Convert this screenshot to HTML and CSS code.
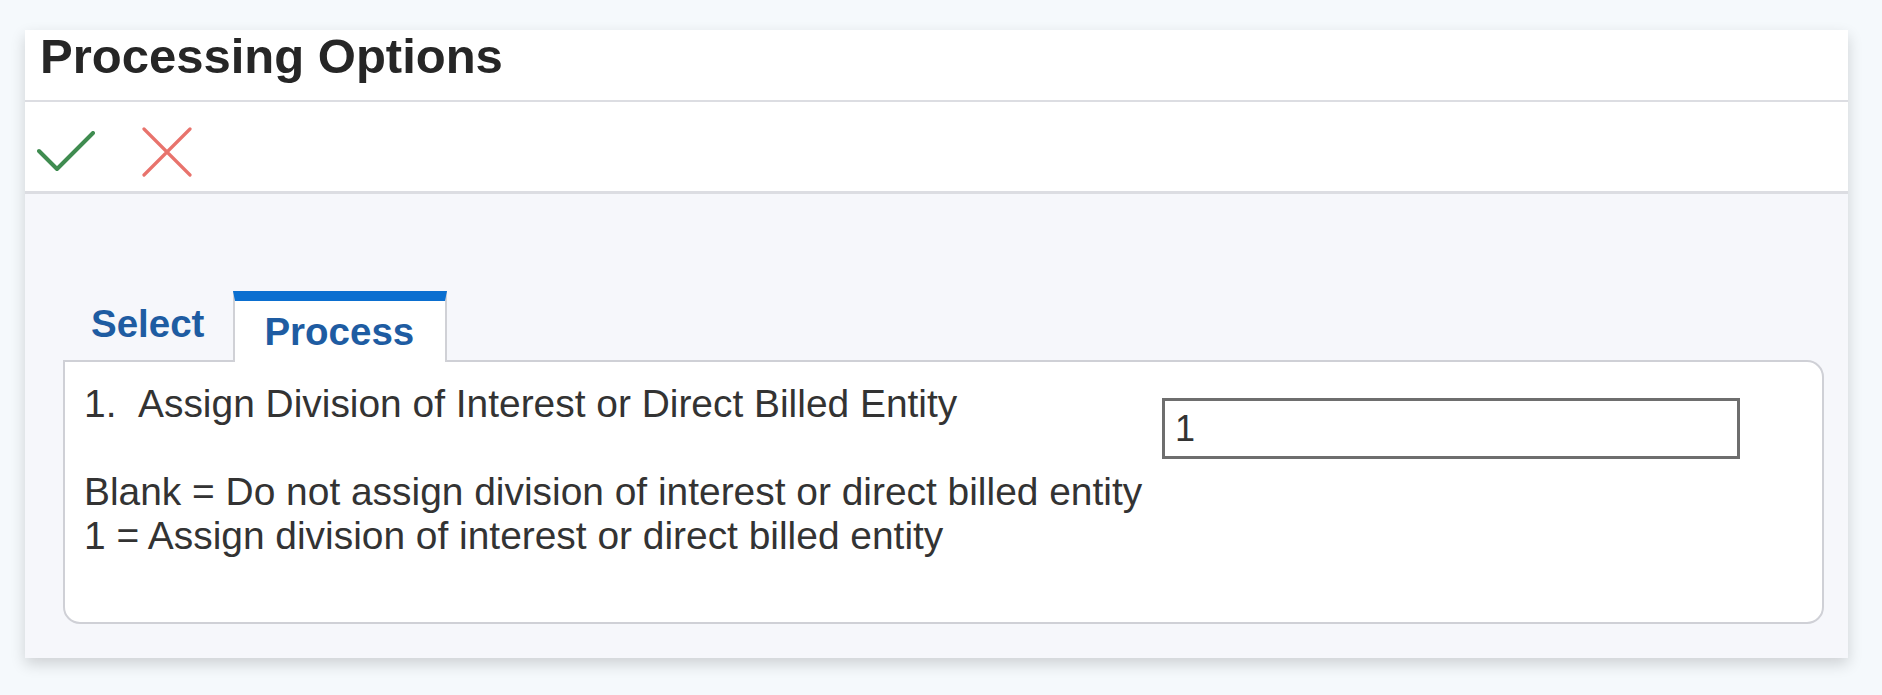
FILE: index.html
```html
<!DOCTYPE html>
<html lang="en">
<head>
<meta charset="utf-8">
<title>Processing Options</title>
<link rel="stylesheet" href="styles.css">
</head>
<body>
<div class="panel">
  <header class="panel-header">
    <h1 class="title">Processing Options</h1>
  </header>
  <div class="toolbar">
    <button class="tool tool-ok" aria-label="OK">
      <svg width="58" height="42" viewBox="0 0 58 42"><polyline points="2,20 20,38 56,2" fill="none" stroke="#3f8c50" stroke-width="4" stroke-linecap="round" stroke-linejoin="round"/></svg>
    </button>
    <button class="tool tool-cancel" aria-label="Cancel">
      <svg width="50" height="50" viewBox="0 0 50 50"><path d="M2 2 L48 48 M48 2 L2 48" fill="none" stroke="#e8736c" stroke-width="3.2" stroke-linecap="round"/></svg>
    </button>
  </div>
  <div class="panel-body">
    <div class="tabs">
      <div class="tab">Select</div>
      <div class="tab tab-active">Process</div>
    </div>
    <div class="tab-content">
      <div class="option-row">
        <div class="option-text">
          <p class="option-label">1.&nbsp;&nbsp;Assign Division of Interest or Direct Billed Entity</p>
          <p class="option-desc">Blank = Do not assign division of interest or direct billed entity<br>1 = Assign division of interest or direct billed entity</p>
        </div>
        <input class="option-input" type="text" value="1">
      </div>
    </div>
  </div>
</div>
</body>
</html>
```
FILE: styles.css
```css
html, body {
  margin: 0;
  padding: 0;
}
body {
  background: #f5f9fc;
  font-family: "Liberation Sans", Arial, sans-serif;
  padding: 30px 0 0 25px;
  height: 695px;
  box-sizing: border-box;
  overflow: hidden;
}
.panel {
  width: 1823px;
  background: #ffffff;
  box-shadow: 0 6px 14px rgba(0, 0, 0, 0.16);
}
.panel-header {
  padding: 2px 0 19px 15px;
  border-bottom: 2px solid #dcdde2;
}
.title {
  margin: 0;
  font-size: 49px;
  line-height: 49px;
  font-weight: bold;
  color: #262626;
}
.toolbar {
  height: 92px;
  display: flex;
  align-items: center;
  padding: 10px 0 0 12px;
  box-sizing: border-box;
  border-bottom: 3px solid #dcdde2;
  gap: 47px;
}
.tool {
  background: none;
  border: 0;
  padding: 0;
  margin: 0;
  display: flex;
}
.panel-body {
  background: #f6f7fb;
  padding: 97px 24px 34px 38px;
}
.tabs {
  display: flex;
  align-items: flex-end;
  height: 69px;
}
.tab {
  font-size: 38.5px;
  font-weight: bold;
  color: #1e5ca2;
  padding: 0 29px 14px 28px;
}
.tab-active {
  background: #ffffff;
  border-top: 10px solid #0b6fd0;
  border-left: 2px solid #d0d1d6;
  border-right: 2px solid #d0d1d6;
  padding: 9px 31px 6px 29px;
  margin-bottom: -2px;
  position: relative;
  z-index: 1;
  box-sizing: border-box;
  height: 71px;
  width: 214px;
}
.tab-content {
  background: #ffffff;
  border: 2px solid #cfd0d6;
  border-radius: 0 17px 17px 17px;
  padding: 20px 82px 64px 19px;
  font-size: 38.9px;
  color: #333333;
}
.option-row {
  display: flex;
  align-items: flex-start;
}
.option-text {
  flex: 1;
}
.option-label {
  margin: 0 0 44px 0;
}
.option-desc {
  margin: 0;
}
.option-input {
  width: 578px;
  height: 61px;
  box-sizing: border-box;
  margin-top: 16px;
  border: 3px solid #6e6e6e;
  font-family: "Liberation Sans", Arial, sans-serif;
  font-size: 36px;
  color: #333333;
  padding: 0 10px;
  background: #ffffff;
  outline: none;
}
```
